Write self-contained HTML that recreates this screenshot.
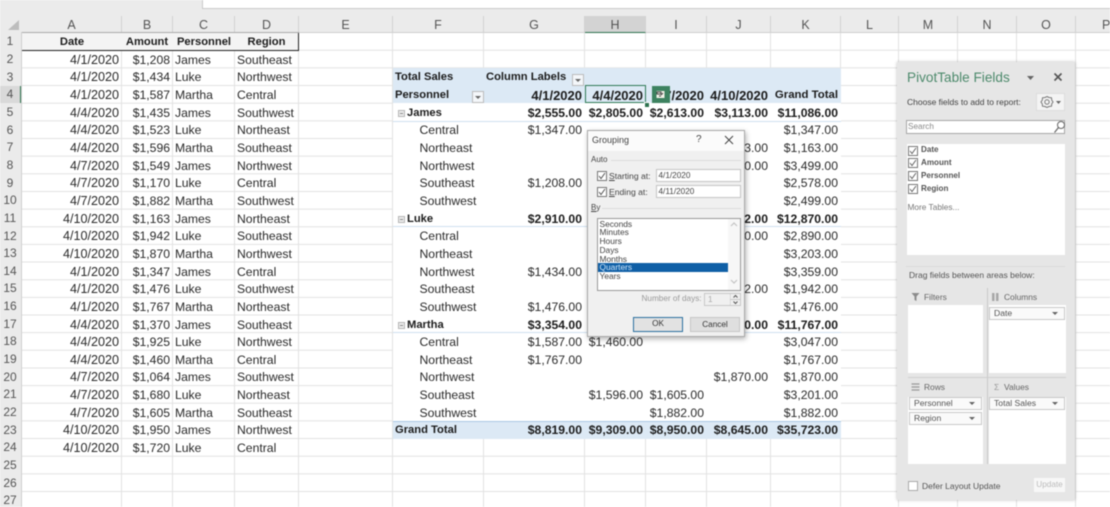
<!DOCTYPE html>
<html><head><meta charset="utf-8"><style>
html,body{margin:0;padding:0;background:#fff}
#w{position:relative;width:1110px;height:507px;overflow:hidden;font-family:"Liberation Sans",sans-serif;color:#2a2a2a;font-size:12.2px;filter:blur(.45px);background:#fff}
.x{position:absolute}
.r{position:absolute;left:0;width:1110px;height:17.65px;line-height:17.65px;white-space:nowrap}
.r span{position:absolute;top:1.5px}
.r span.n{top:.8px}
.n{left:0;width:20px;text-align:center;color:#555;font-size:12px}
.a{right:991px;font-size:12.6px}.b{right:940px}.c{left:175px}.d{left:237px}
.f{left:395px}.e{left:407px}.l{left:419.5px}
.g{right:528px}.h{right:467px}.i{right:406px}.j{right:342px}.k{right:272px}
.B{font-weight:bold;color:#1c1c1c}.T{font-size:11.2px}.D{font-size:13px}
.hd{position:absolute;top:16px;height:16px;line-height:18px;text-align:center;color:#555;font-size:12.5px;border-right:1px solid #d2d2d2;box-sizing:border-box}
.t{position:absolute;white-space:nowrap;line-height:12px;font-size:8.4px;color:#444}
.cb{position:absolute;width:8px;height:8px;border:1px solid #777;background:#fff}
.cb svg{position:absolute;left:0;top:0}
.w{position:absolute;background:#fff}
.fd{position:absolute;background:#fafafa;border:1px solid #c8c8c8;box-sizing:border-box;font-size:8.6px;line-height:11px;padding-left:4px;color:#555}
.fd i{position:absolute;right:6px;top:4px;border:3px solid transparent;border-top:3px solid #666;border-bottom:0}
.ex{position:absolute;width:5px;height:5px;border:1px solid #b5b5b5;background:#ececec}
.ex:after{content:"";position:absolute;left:1px;top:2px;width:3px;height:1px;background:#888}
.dd{position:absolute;width:10px;height:10px;background:#f4f7fa;border:1px solid #bbb}
.dd i{position:absolute;left:2px;top:4px;border:3px solid transparent;border-top:3px solid #666;border-bottom:0}
</style></head><body><div id="w">

<div class="x" style="left:0;top:0;width:1110px;height:32px;background:#ebebeb"></div>
<div class="x" style="left:202px;top:0;width:908px;height:8px;background:#fff;border-bottom:1px solid #c9c9c9;border-left:1px solid #c9c9c9"></div>
<div class="x" style="left:0;top:32px;width:21px;height:475px;background:#ebebeb;border-right:1px solid #cfcfcf"></div>
<svg class="x" style="left:0;top:0" width="22" height="33"><path d="M19 20V30H8z" fill="#bdbdbd"/></svg>

<svg class="x" style="left:0;top:0" width="1110" height="507"><g stroke="#e2e2e2" stroke-width="1" fill="none">
<path d="M22 50.25H1110M22 67.9H1110M22 85.55H1110M22 103.2H1110M22 120.85H1110M22 138.5H1110M22 156.15H1110M22 173.8H1110M22 191.45H1110M22 209.1H1110M22 226.75H1110M22 244.4H1110M22 262.05H1110M22 279.7H1110M22 297.35H1110M22 315H1110M22 332.65H1110M22 350.3H1110M22 367.95H1110M22 385.6H1110M22 403.25H1110M22 420.9H1110M22 438.55H1110M22 456.2H1110M22 473.85H1110M22 491.5H1110"/>
<path d="M121.5 32V507M172.5 32V507M234.5 32V507M298.5 32V507M392.5 32V507M483.5 32V507M584.5 32V507M645.5 32V507M706.5 32V507M770.5 32V507M840.5 32V507M898.5 32V507M957.5 32V507M1016.5 32V507M1075.5 32V507"/>
<path d="M22 32.5H1110" stroke="#cfcfcf"/>
</g></svg>

<div class="x" style="left:22px;top:33px;width:276px;height:17px;background:#f4f4f4"></div>
<div class="x" style="left:22px;top:49.5px;width:277px;height:1.6px;background:#222"></div>
<div class="x" style="left:297.6px;top:32px;width:1.4px;height:18px;background:#222"></div>
<div class="x" style="left:22px;top:32px;width:277px;height:1px;background:#aaa"></div>

<div class="hd" style="left:22px;width:100px">A</div>
<div class="hd" style="left:122px;width:51px">B</div>
<div class="hd" style="left:173px;width:62px">C</div>
<div class="hd" style="left:235px;width:64px">D</div>
<div class="hd" style="left:299px;width:94px">E</div>
<div class="hd" style="left:393px;width:91px">F</div>
<div class="hd" style="left:484px;width:101px">G</div>
<div class="hd" style="left:585px;width:61px;background:#d3d3d3;border-bottom:1px solid #2f7350;height:17px">H</div>
<div class="hd" style="left:646px;width:61px">I</div>
<div class="hd" style="left:707px;width:64px">J</div>
<div class="hd" style="left:771px;width:70px">K</div>
<div class="hd" style="left:841px;width:58px">L</div>
<div class="hd" style="left:899px;width:59px">M</div>
<div class="hd" style="left:958px;width:59px">N</div>
<div class="hd" style="left:1017px;width:59px">O</div>
<div class="hd" style="left:1076px;width:34px;text-align:left;padding-left:26px;border:0">P</div>

<div class="x" style="left:0;top:85.5px;width:21px;height:17.7px;background:#d9d9d9;border-right:1.5px solid #2f7350;box-sizing:border-box"></div>

<!-- pivot background -->
<div class="x" style="left:393px;top:68px;width:447.5px;height:370.5px;background:#fff"></div>
<div class="x" style="left:393px;top:68px;width:447.5px;height:35.2px;background:#dce9f5"></div>
<div class="x" style="left:393px;top:120.5px;width:447.5px;height:1px;background:#cfe0f0"></div>
<div class="x" style="left:393px;top:226.4px;width:447.5px;height:1px;background:#cfe0f0"></div>
<div class="x" style="left:393px;top:332.3px;width:447.5px;height:1px;background:#cfe0f0"></div>
<div class="x" style="left:393px;top:421px;width:447.5px;height:17.5px;background:#dce9f5;border-top:1px solid #a9c8e4;box-sizing:border-box"></div>

<div class="r" style="top:32.6px"><span class="n">1</span><span class="B T" style="left:22px;width:100px;text-align:center">Date</span><span class="B T" style="left:122px;width:50px;text-align:center">Amount</span><span class="B T" style="left:173px;width:62px;text-align:center">Personnel</span><span class="B T" style="left:235px;width:63px;text-align:center">Region</span></div>
<div class="r" style="top:50.25px"><span class="n">2</span><span class="a">4/1/2020</span><span class="b">$1,208</span><span class="c">James</span><span class="d">Southeast</span></div>
<div class="r" style="top:67.9px"><span class="n">3</span><span class="a">4/1/2020</span><span class="b">$1,434</span><span class="c">Luke</span><span class="d">Northwest</span><span class="f B T">Total Sales</span><span class="B T" style="left:486px">Column Labels</span></div>
<div class="r" style="top:85.55px"><span class="n">4</span><span class="a">4/1/2020</span><span class="b">$1,587</span><span class="c">Martha</span><span class="d">Central</span><span class="f B T">Personnel</span><span class="g B D">4/1/2020</span><span class="h B D">4/4/2020</span><span class="i B D">4/7/2020</span><span class="j B D">4/10/2020</span><span class="k B T" style="font-size:11.4px">Grand Total</span></div>
<div class="r" style="top:103.2px"><span class="n">5</span><span class="a">4/4/2020</span><span class="b">$1,435</span><span class="c">James</span><span class="d">Southwest</span><span class="e B T">James</span><span class="g B">$2,555.00</span><span class="h B">$2,805.00</span><span class="i B">$2,613.00</span><span class="j B">$3,113.00</span><span class="k B">$11,086.00</span></div>
<div class="r" style="top:120.85px"><span class="n">6</span><span class="a">4/4/2020</span><span class="b">$1,523</span><span class="c">Luke</span><span class="d">Northeast</span><span class="l">Central</span><span class="g">$1,347.00</span><span class="k">$1,347.00</span></div>
<div class="r" style="top:138.5px"><span class="n">7</span><span class="a">4/4/2020</span><span class="b">$1,596</span><span class="c">Martha</span><span class="d">Southeast</span><span class="l">Northeast</span><span class="j">$1,163.00</span><span class="k">$1,163.00</span></div>
<div class="r" style="top:156.15px"><span class="n">8</span><span class="a">4/7/2020</span><span class="b">$1,549</span><span class="c">James</span><span class="d">Northwest</span><span class="l">Northwest</span><span class="j">$1,950.00</span><span class="k">$3,499.00</span></div>
<div class="r" style="top:173.8px"><span class="n">9</span><span class="a">4/7/2020</span><span class="b">$1,170</span><span class="c">Luke</span><span class="d">Central</span><span class="l">Southeast</span><span class="g">$1,208.00</span><span class="k">$2,578.00</span></div>
<div class="r" style="top:191.45px"><span class="n">10</span><span class="a">4/7/2020</span><span class="b">$1,882</span><span class="c">Martha</span><span class="d">Southwest</span><span class="l">Southwest</span><span class="k">$2,499.00</span></div>
<div class="r" style="top:209.1px"><span class="n">11</span><span class="a">4/10/2020</span><span class="b">$1,163</span><span class="c">James</span><span class="d">Northeast</span><span class="e B T">Luke</span><span class="g B">$2,910.00</span><span class="j B">$3,662.00</span><span class="k B">$12,870.00</span></div>
<div class="r" style="top:226.75px"><span class="n">12</span><span class="a">4/10/2020</span><span class="b">$1,942</span><span class="c">Luke</span><span class="d">Southeast</span><span class="l">Central</span><span class="j">$1,720.00</span><span class="k">$2,890.00</span></div>
<div class="r" style="top:244.4px"><span class="n">13</span><span class="a">4/10/2020</span><span class="b">$1,870</span><span class="c">Martha</span><span class="d">Northwest</span><span class="l">Northeast</span><span class="k">$3,203.00</span></div>
<div class="r" style="top:262.05px"><span class="n">14</span><span class="a">4/1/2020</span><span class="b">$1,347</span><span class="c">James</span><span class="d">Central</span><span class="l">Northwest</span><span class="g">$1,434.00</span><span class="k">$3,359.00</span></div>
<div class="r" style="top:279.7px"><span class="n">15</span><span class="a">4/1/2020</span><span class="b">$1,476</span><span class="c">Luke</span><span class="d">Southwest</span><span class="l">Southeast</span><span class="j">$1,942.00</span><span class="k">$1,942.00</span></div>
<div class="r" style="top:297.35px"><span class="n">16</span><span class="a">4/1/2020</span><span class="b">$1,767</span><span class="c">Martha</span><span class="d">Northeast</span><span class="l">Southwest</span><span class="g">$1,476.00</span><span class="k">$1,476.00</span></div>
<div class="r" style="top:315px"><span class="n">17</span><span class="a">4/4/2020</span><span class="b">$1,370</span><span class="c">James</span><span class="d">Southeast</span><span class="e B T">Martha</span><span class="g B">$3,354.00</span><span class="j B">$1,870.00</span><span class="k B">$11,767.00</span></div>
<div class="r" style="top:332.65px"><span class="n">18</span><span class="a">4/4/2020</span><span class="b">$1,925</span><span class="c">Luke</span><span class="d">Northwest</span><span class="l">Central</span><span class="g">$1,587.00</span><span class="h">$1,460.00</span><span class="k">$3,047.00</span></div>
<div class="r" style="top:350.3px"><span class="n">19</span><span class="a">4/4/2020</span><span class="b">$1,460</span><span class="c">Martha</span><span class="d">Central</span><span class="l">Northeast</span><span class="g">$1,767.00</span><span class="k">$1,767.00</span></div>
<div class="r" style="top:367.95px"><span class="n">20</span><span class="a">4/7/2020</span><span class="b">$1,064</span><span class="c">James</span><span class="d">Southwest</span><span class="l">Northwest</span><span class="j">$1,870.00</span><span class="k">$1,870.00</span></div>
<div class="r" style="top:385.6px"><span class="n">21</span><span class="a">4/7/2020</span><span class="b">$1,680</span><span class="c">Luke</span><span class="d">Northeast</span><span class="l">Southeast</span><span class="h">$1,596.00</span><span class="i">$1,605.00</span><span class="k">$3,201.00</span></div>
<div class="r" style="top:403.25px"><span class="n">22</span><span class="a">4/7/2020</span><span class="b">$1,605</span><span class="c">Martha</span><span class="d">Southeast</span><span class="l">Southwest</span><span class="i">$1,882.00</span><span class="k">$1,882.00</span></div>
<div class="r" style="top:420.9px"><span class="n">23</span><span class="a">4/10/2020</span><span class="b">$1,950</span><span class="c">James</span><span class="d">Northwest</span><span class="f B T">Grand Total</span><span class="g B">$8,819.00</span><span class="h B">$9,309.00</span><span class="i B">$8,950.00</span><span class="j B">$8,645.00</span><span class="k B">$35,723.00</span></div>
<div class="r" style="top:438.55px"><span class="n">24</span><span class="a">4/10/2020</span><span class="b">$1,720</span><span class="c">Luke</span><span class="d">Central</span></div>
<div class="r" style="top:456.2px"><span class="n">25</span></div>
<div class="r" style="top:473.85px"><span class="n">26</span></div>
<div class="r" style="top:491.5px"><span class="n">27</span></div>

<!-- pivot filter buttons and expanders -->
<div class="dd" style="left:572px;top:73.5px"><i></i></div>
<div class="dd" style="left:472px;top:90.5px"><i></i></div>
<div class="ex" style="left:398px;top:110px"></div>
<div class="ex" style="left:398px;top:216px"></div>
<div class="ex" style="left:398px;top:322px"></div>

<!-- selection -->
<div class="x" style="left:584.5px;top:85px;width:61px;height:18px;border:1.5px solid #2f7a55;box-sizing:border-box"></div>
<div class="x" style="left:643.5px;top:101.5px;width:4px;height:4px;background:#2f7350;border:.5px solid #fff"></div>
<div class="x" style="left:652px;top:86px;width:17.5px;height:17px;background:#3d8260"></div>
<svg class="x" style="left:652px;top:86px" width="18" height="17"><rect x="4.5" y="5" width="8" height="7" fill="#f2f2e8"/><path d="M5 6H9V8H5zM9 9L11 7M7 10H9" stroke="#444" stroke-width="1" fill="none"/></svg>

<!-- Grouping dialog -->
<div class="x" style="left:586.5px;top:130px;width:158.5px;height:207px;background:#f0f0f0;border:1px solid #a8a8a8;box-sizing:border-box;box-shadow:1px 2px 5px rgba(0,0,0,.3)"></div>
<div class="x" style="left:587.5px;top:131px;width:156.5px;height:20px;background:#fbfbfb"></div>
<div class="t" style="left:592px;top:134px;font-size:9px">Grouping</div>
<div class="t" style="left:696px;top:134px;font-size:10px">?</div>
<svg class="x" style="left:724px;top:135px" width="10" height="10"><path d="M1 1L9 9M9 1L1 9" stroke="#444" stroke-width="1"/></svg>
<div class="t" style="left:591px;top:154px;font-size:8px">Auto</div>
<div class="x" style="left:611px;top:159.5px;width:130px;height:1px;background:#dcdcdc"></div>
<div class="cb" style="left:597px;top:171px"><svg width="8" height="8"><path d="M1 4L3 6.5L7 1" stroke="#555" fill="none"/></svg></div>
<div class="t" style="left:609px;top:170px;font-size:8.6px"><u>S</u>tarting at:</div>
<div class="w" style="left:655.5px;top:169px;width:85px;height:13px;border:1px solid #c4c4c4;box-sizing:border-box;font-size:8.2px;line-height:11px;padding-left:2px;color:#444">4/1/2020</div>
<div class="cb" style="left:597px;top:187px"><svg width="8" height="8"><path d="M1 4L3 6.5L7 1" stroke="#555" fill="none"/></svg></div>
<div class="t" style="left:609px;top:185.5px;font-size:8.6px"><u>E</u>nding at:</div>
<div class="w" style="left:655.5px;top:185px;width:85px;height:13px;border:1px solid #c4c4c4;box-sizing:border-box;font-size:8.2px;line-height:11px;padding-left:2px;color:#444">4/11/2020</div>
<div class="t" style="left:591px;top:202px;font-size:8px"><u>B</u>y</div>
<div class="x" style="left:602px;top:207.5px;width:139px;height:1px;background:#dcdcdc"></div>
<div class="w" style="left:597px;top:217.5px;width:144px;height:73px;border:1px solid #999;box-sizing:border-box"></div>
<div class="x" style="left:598px;top:262.5px;width:130px;height:9px;background:#0f5fa6"></div>
<div class="t" style="left:599.5px;top:217.5px;font-size:8.4px">Seconds</div>
<div class="t" style="left:599.5px;top:226px;font-size:8.4px">Minutes</div>
<div class="t" style="left:599.5px;top:235px;font-size:8.4px">Hours</div>
<div class="t" style="left:599.5px;top:244px;font-size:8.4px">Days</div>
<div class="t" style="left:599.5px;top:252.7px;font-size:8.4px">Months</div>
<div class="t" style="left:599.5px;top:261.3px;font-size:8.4px;color:#cfe6fa">Quarters</div>
<div class="t" style="left:599.5px;top:270px;font-size:8.4px">Years</div>
<div class="x" style="left:728px;top:218.5px;width:12px;height:71px;background:#f7f7f7"></div>
<svg class="x" style="left:728px;top:218px" width="12" height="72"><path d="M3 8L6 5L9 8M3 62L6 65L9 62" stroke="#c4c4c4" fill="none" stroke-width="1.2"/></svg>
<div class="t" style="left:641.5px;top:293px;font-size:8.2px;color:#9a9a9a">Number of days:</div>
<div class="x" style="left:704px;top:293px;width:37px;height:13px;background:#f0f0f0;border:1px solid #c8c8c8;box-sizing:border-box;font-size:8.2px;line-height:11px;padding-left:3px;color:#aaa">1</div>
<svg class="x" style="left:730px;top:293px" width="11" height="13"><path d="M0 0V13M0 6.5H11" stroke="#c8c8c8"/><path d="M3.5 4.5L5.5 2.5L7.5 4.5M3.5 8.5L5.5 10.5L7.5 8.5" stroke="#555" fill="none"/></svg>
<div class="x" style="left:633px;top:317px;width:50px;height:15px;background:#e2e2e2;border:1.5px solid #2a6f9f;box-sizing:border-box;text-align:center;font-size:8.2px;line-height:12px;color:#333">OK</div>
<div class="x" style="left:690px;top:317px;width:50px;height:15px;background:#dfdfdf;border:1px solid #c6c6c6;box-sizing:border-box;text-align:center;font-size:8.2px;line-height:13px;color:#333">Cancel</div>

<!-- PivotTable pane -->
<div class="x" style="left:897px;top:62px;width:177.5px;height:437.5px;background:#e6e6e6;box-shadow:0 0 3px rgba(0,0,0,.25)"></div>
<div class="t" style="left:907px;top:70px;font-size:13.6px;line-height:16px;color:#4d8a6c">PivotTable Fields</div>
<svg class="x" style="left:1026px;top:74px" width="10" height="8"><path d="M1 2H8L4.500 6z" fill="#666"/></svg>
<svg class="x" style="left:1053px;top:72px" width="10" height="10"><path d="M1.500 1.500L8.500 8.500M8.500 1.500L1.500 8.500" stroke="#555" stroke-width="1.600"/></svg>
<div class="t" style="left:907px;top:96px;font-size:8.5px">Choose fields to add to report:</div>
<div class="x" style="left:1035.500px;top:93px;width:29.500px;height:18px;background:#f4f4f4;border:1px solid #ddd;box-sizing:border-box"></div>
<svg class="x" style="left:1040px;top:95px" width="22" height="14"><circle cx="7" cy="7" r="2.200" fill="none" stroke="#777"/><path d="M7 1.500L9 2.500L11.500 2.800L11.700 5L13 7L11.700 9L11.500 11.200L9 11.500L7 12.500L5 11.500L2.500 11.200L2.300 9L1 7L2.300 5L2.500 2.800L5 2.500z" fill="none" stroke="#777"/><path d="M16 6H21L18.500 9z" fill="#666"/></svg>
<div class="w" style="left:906px;top:120px;width:159px;height:13.500px;border:1px solid #a6a6a6;box-sizing:border-box;font-size:8.200px;line-height:11px;padding-left:1px;color:#888">Search</div>
<svg class="x" style="left:1053px;top:120px" width="13" height="14"><circle cx="8" cy="5" r="3.500" fill="none" stroke="#666"/><path d="M5.500 7.500L1.500 12.500" stroke="#666" stroke-width="1.200"/></svg>
<div class="w" style="left:906.500px;top:144px;width:158.500px;height:111px"></div>
<div class="cb" style="left:908px;top:145.500px"><svg width="8" height="8"><path d="M1 4L3 6.500L7 1" stroke="#666" fill="none"/></svg></div>
<div class="t" style="left:921px;top:144px;font-weight:bold;color:#555;font-size:8.100px">Date</div>
<div class="cb" style="left:908px;top:158px"><svg width="8" height="8"><path d="M1 4L3 6.500L7 1" stroke="#666" fill="none"/></svg></div>
<div class="t" style="left:921px;top:156.800px;font-weight:bold;color:#555;font-size:8.100px">Amount</div>
<div class="cb" style="left:908px;top:171px"><svg width="8" height="8"><path d="M1 4L3 6.500L7 1" stroke="#666" fill="none"/></svg></div>
<div class="t" style="left:921px;top:169.500px;font-weight:bold;color:#555;font-size:8.100px">Personnel</div>
<div class="cb" style="left:908px;top:183.500px"><svg width="8" height="8"><path d="M1 4L3 6.500L7 1" stroke="#666" fill="none"/></svg></div>
<div class="t" style="left:921px;top:182.500px;font-weight:bold;color:#555;font-size:8.100px">Region</div>
<div class="t" style="left:907.500px;top:201px;color:#777;font-size:8.300px">More Tables...</div>
<div class="x" style="left:906px;top:265.500px;width:159px;height:1px;background:#dadada"></div>
<div class="t" style="left:909px;top:269px;font-size:8.500px;color:#555">Drag fields between areas below:</div>
<svg class="x" style="left:911px;top:292px" width="9" height="10"><path d="M.5 1H8.500L5.500 4.500V9L3.500 8V4.500z" fill="#8c8c8c"/></svg>
<div class="t" style="left:924px;top:291px;color:#666;font-size:8.400px">Filters</div>
<svg class="x" style="left:991px;top:292px" width="9" height="10"><path d="M1 1H3.500V9H1zM5 1H7.500V9H5z" fill="#a8a8a8"/></svg>
<div class="t" style="left:1004px;top:291px;color:#666;font-size:8.400px">Columns</div>
<div class="w" style="left:908px;top:305px;width:74.500px;height:68px"></div>
<div class="w" style="left:989px;top:305px;width:77px;height:68px"></div>
<div class="fd" style="left:989px;top:306.500px;width:76px;height:13px">Date<i></i></div>
<div class="x" style="left:986.500px;top:288px;width:1px;height:176px;background:#c9c9c9"></div>
<div class="x" style="left:908px;top:377px;width:158px;height:1px;background:#cfcfcf"></div>
<svg class="x" style="left:911px;top:383px" width="9" height="8"><path d="M.5 1H8.500M.5 4H8.500M.5 7H8.500" stroke="#9a9a9a" stroke-width="1.300"/></svg>
<div class="t" style="left:924px;top:381px;color:#666;font-size:8.400px">Rows</div>
<div class="t" style="left:994px;top:381px;color:#999;font-size:8.400px">Σ</div>
<div class="t" style="left:1004px;top:381px;color:#666;font-size:8.400px">Values</div>
<div class="w" style="left:908px;top:396.500px;width:74.500px;height:67.500px"></div>
<div class="w" style="left:989px;top:396.500px;width:77px;height:67.500px"></div>
<div class="fd" style="left:909px;top:397px;width:72.500px;height:13px">Personnel<i></i></div>
<div class="fd" style="left:909px;top:411.500px;width:72.500px;height:13px">Region<i></i></div>
<div class="fd" style="left:989px;top:397px;width:76px;height:13px">Total Sales<i></i></div>
<div class="cb" style="left:908px;top:481px;border-color:#aaa"></div>
<div class="t" style="left:922px;top:479.500px;color:#555;font-size:8.500px">Defer Layout Update</div>
<div class="x" style="left:1034px;top:478px;width:31px;height:14px;background:#f7f7f7;text-align:center;font-size:8.200px;line-height:14px;color:#bbb">Update</div>

</div></body></html>
